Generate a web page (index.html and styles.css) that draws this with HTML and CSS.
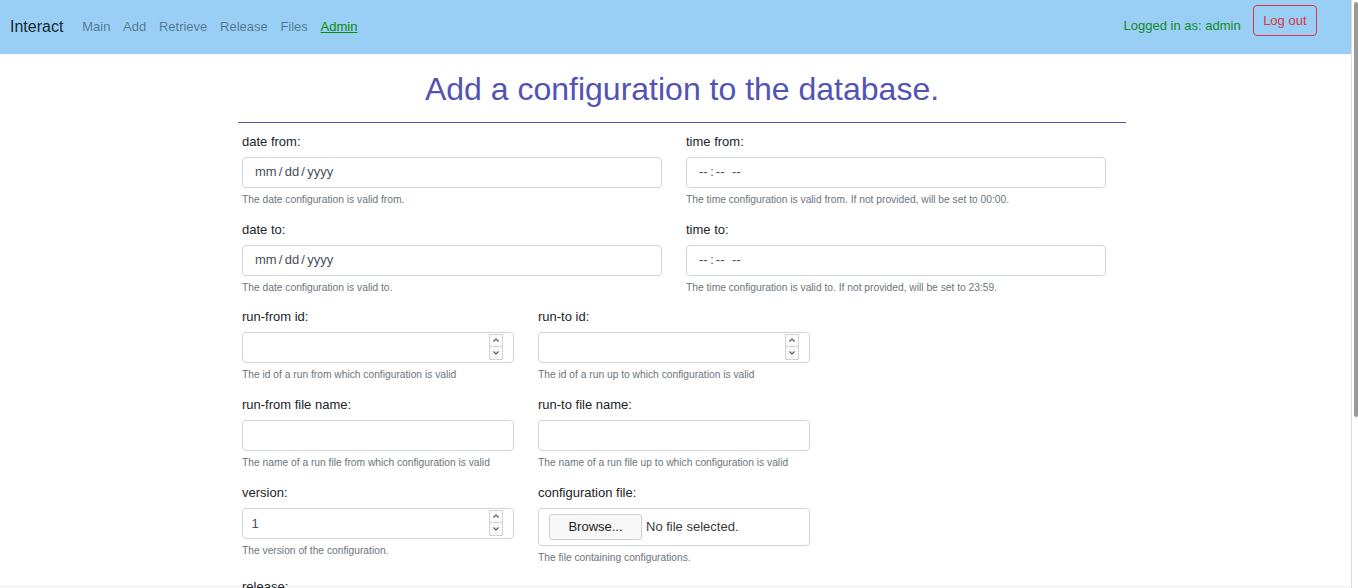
FILE: index.html
```html
<!DOCTYPE html>
<html lang="en">
<head>
<meta charset="utf-8">
<title>Interact - Add configuration</title>
<link rel="stylesheet" href="styles.css">
</head>
<body>
<div class="page">
  <nav class="navbar">
    <a class="brand" href="#">Interact</a>
    <ul class="nav">
      <li><a class="nav-link" href="#">Main</a></li>
      <li><a class="nav-link" href="#">Add</a></li>
      <li><a class="nav-link" href="#">Retrieve</a></li>
      <li><a class="nav-link" href="#">Release</a></li>
      <li><a class="nav-link" href="#">Files</a></li>
      <li><a class="nav-link active" href="#">Admin</a></li>
    </ul>
    <span class="user">Logged in as: admin</span>
    <button class="logout" type="button">Log out</button>
  </nav>

  <main class="main">
    <h1 class="title">Add a configuration to the database.</h1>
    <hr class="rule">
    <form class="form">
      <div class="grid wide">
        <div class="group">
          <label class="label">date from:</label>
          <div class="field"><span>mm</span><span class="slash">/</span><span>dd</span><span class="slash">/</span><span>yyyy</span></div>
          <div class="help">The date configuration is valid from.</div>
        </div>
        <div class="group">
          <label class="label">time from:</label>
          <div class="field"><span>--</span><span class="colon">:</span><span>--</span><span class="ampm">--</span></div>
          <div class="help">The time configuration is valid from. If not provided, will be set to 00:00.</div>
        </div>
        <div class="group">
          <label class="label">date to:</label>
          <div class="field"><span>mm</span><span class="slash">/</span><span>dd</span><span class="slash">/</span><span>yyyy</span></div>
          <div class="help">The date configuration is valid to.</div>
        </div>
        <div class="group">
          <label class="label">time to:</label>
          <div class="field"><span>--</span><span class="colon">:</span><span>--</span><span class="ampm">--</span></div>
          <div class="help">The time configuration is valid to. If not provided, will be set to 23:59.</div>
        </div>
      </div>

      <div class="grid narrow">
        <div class="group">
          <label class="label">run-from id:</label>
          <div class="num">
            <input class="input" type="number">
            <span class="spin"><span class="spin-btn"><svg viewBox="0 0 12 11" width="12" height="11"><path d="M3.5 6.5 L6 4 L8.5 6.5" fill="none" stroke="#555" stroke-width="1.1"/></svg></span><span class="spin-btn"><svg viewBox="0 0 12 11" width="12" height="11"><path d="M3.5 4.5 L6 7 L8.5 4.5" fill="none" stroke="#555" stroke-width="1.1"/></svg></span></span>
          </div>
          <div class="help">The id of a run from which configuration is valid</div>
        </div>
        <div class="group">
          <label class="label">run-to id:</label>
          <div class="num">
            <input class="input" type="number">
            <span class="spin"><span class="spin-btn"><svg viewBox="0 0 12 11" width="12" height="11"><path d="M3.5 6.5 L6 4 L8.5 6.5" fill="none" stroke="#555" stroke-width="1.1"/></svg></span><span class="spin-btn"><svg viewBox="0 0 12 11" width="12" height="11"><path d="M3.5 4.5 L6 7 L8.5 4.5" fill="none" stroke="#555" stroke-width="1.1"/></svg></span></span>
          </div>
          <div class="help">The id of a run up to which configuration is valid</div>
        </div>
        <div class="group">
          <label class="label">run-from file name:</label>
          <input class="input" type="text">
          <div class="help">The name of a run file from which configuration is valid</div>
        </div>
        <div class="group">
          <label class="label">run-to file name:</label>
          <input class="input" type="text">
          <div class="help">The name of a run file up to which configuration is valid</div>
        </div>
        <div class="group">
          <label class="label">version:</label>
          <div class="num">
            <input class="input" type="number" value="1">
            <span class="spin"><span class="spin-btn"><svg viewBox="0 0 12 11" width="12" height="11"><path d="M3.5 6.5 L6 4 L8.5 6.5" fill="none" stroke="#555" stroke-width="1.1"/></svg></span><span class="spin-btn"><svg viewBox="0 0 12 11" width="12" height="11"><path d="M3.5 4.5 L6 7 L8.5 4.5" fill="none" stroke="#555" stroke-width="1.1"/></svg></span></span>
          </div>
          <div class="help">The version of the configuration.</div>
        </div>
        <div class="group">
          <label class="label">configuration file:</label>
          <div class="file">
            <button class="browse" type="button">Browse...</button>
            <span class="file-name">No file selected.</span>
          </div>
          <div class="help">The file containing configurations.</div>
        </div>
        <div class="group release">
          <label class="label">release:</label>
          <input class="input" type="text">
          <div class="help">The release of the configuration.</div>
        </div>
      </div>
    </form>
  </main>
</div>
<div class="scrollbar"><div class="thumb"></div></div>
<div class="bottom-strip"></div>
</body>
</html>
```

FILE: styles.css
```css
html {
  overflow: hidden;
}
body {
  margin: 0;
  font-family: "Liberation Sans", Arial, sans-serif;
  font-size: 13px;
  line-height: 19.5px;
  color: #212529;
  background: #fff;
}
.page {
  width: 1351px;
}

/* navbar */
.navbar {
  display: flex;
  align-items: center;
  height: 54px;
  box-sizing: border-box;
  padding: 0 10px;
  background: #99cff5;
}
.brand {
  font-size: 16px;
  line-height: 24px;
  color: rgba(0, 0, 0, 0.85);
  text-decoration: none;
  margin-right: 12.5px;
}
.nav {
  display: flex;
  list-style: none;
  margin: 0;
  padding: 0;
}
.nav-link {
  display: block;
  padding: 0 6.35px;
  color: rgba(0, 0, 0, 0.45);
  text-decoration: none;
}
.nav-link.active {
  color: #0a8a0a;
  text-decoration: underline;
}
.user {
  margin-left: auto;
  margin-right: 12px;
  margin-bottom: 2px;
  color: #14892a;
}
.logout {
  align-self: flex-start;
  margin-top: 5px;
  margin-right: 24px;
  height: 31px;
  box-sizing: border-box;
  padding: 0 9.5px;
  font-family: "Liberation Sans", Arial, sans-serif;
  font-size: 13px;
  line-height: 19.5px;
  color: #dc3545;
  background: transparent;
  border: 1px solid #dc3545;
  border-radius: 4px;
}

/* main */
.main {
  width: 888px;
  margin-left: 238px;
  padding-top: 16px;
}
.title {
  margin: 0;
  font-size: 32px;
  line-height: 38px;
  font-weight: 400;
  color: #5352b5;
  text-align: center;
}
.rule {
  margin: 14px 0 9px;
  border: 0;
  border-top: 1px solid #55549f;
  height: 0;
}
.form {
  padding-left: 4px;
}
.grid {
  display: grid;
  column-gap: 24px;
  align-items: start;
}
.grid.wide {
  grid-template-columns: 420px 420px;
  margin-bottom: -1px;
}
.grid.narrow {
  grid-template-columns: 272px 272px;
}
.group {
  margin-bottom: 13px;
}
.group.release {
  margin-top: -1px;
}
.label {
  display: block;
  line-height: 19.5px;
  margin-bottom: 5px;
  color: #212529;
}
.field {
  display: flex;
  align-items: center;
  height: 31px;
  box-sizing: border-box;
  padding: 0 12px;
  border: 1px solid #ced4da;
  border-radius: 4px;
  color: #495057;
}
.slash {
  margin: 0 2.2px;
}
.colon {
  margin: 0 2px 0 2.5px;
}
.ampm {
  margin-left: 7.5px;
}
.input {
  display: block;
  width: 100%;
  height: 31px;
  box-sizing: border-box;
  margin: 0;
  padding: 0 8.5px;
  font-family: "Liberation Sans", Arial, sans-serif;
  font-size: 13px;
  color: #495057;
  border: 1px solid #ced4da;
  border-radius: 4px;
  background: #fff;
  outline: none;
  -moz-appearance: textfield;
  appearance: textfield;
}
.input::-webkit-inner-spin-button,
.input::-webkit-outer-spin-button {
  -webkit-appearance: none;
  margin: 0;
}
.num {
  position: relative;
}
.spin {
  position: absolute;
  top: 2px;
  right: 11px;
  width: 14px;
  display: flex;
  flex-direction: column;
}
.spin-btn {
  display: flex;
  align-items: center;
  justify-content: center;
  height: 13px;
  box-sizing: border-box;
  border: 1px solid #d4d4d4;
  background: #fafafa;
}
.spin-btn + .spin-btn {
  border-top: 0;
}
.file {
  display: flex;
  align-items: center;
  height: 38px;
  box-sizing: border-box;
  padding-left: 10px;
  border: 1px solid #ced4da;
  border-radius: 4px;
}
.browse {
  width: 93px;
  height: 26px;
  box-sizing: border-box;
  padding: 0;
  font-family: "Liberation Sans", Arial, sans-serif;
  font-size: 13px;
  color: #222;
  background: #f8f8f8;
  border: 1px solid #cfcfcf;
  border-radius: 3px;
}
.file-name {
  margin-left: 4px;
  color: #3a3a3a;
}
.help {
  margin-top: 4px;
  font-size: 10.25px;
  line-height: 15.5px;
  color: #6c757d;
}

/* fake window scrollbar */
.scrollbar {
  position: fixed;
  top: 0;
  right: 0;
  width: 6px;
  height: 100%;
  border-left: 1px solid #dcdcdc;
  background: #fff;
}
.thumb {
  width: 4px;
  height: 415px;
  margin: 2px 0 0 2px;
  background: #9a9a9a;
  border-radius: 2px;
}
.bottom-strip {
  position: fixed;
  left: 0;
  bottom: 0;
  width: 1351px;
  height: 3px;
  background: rgba(0, 0, 0, 0.03);
}
```
